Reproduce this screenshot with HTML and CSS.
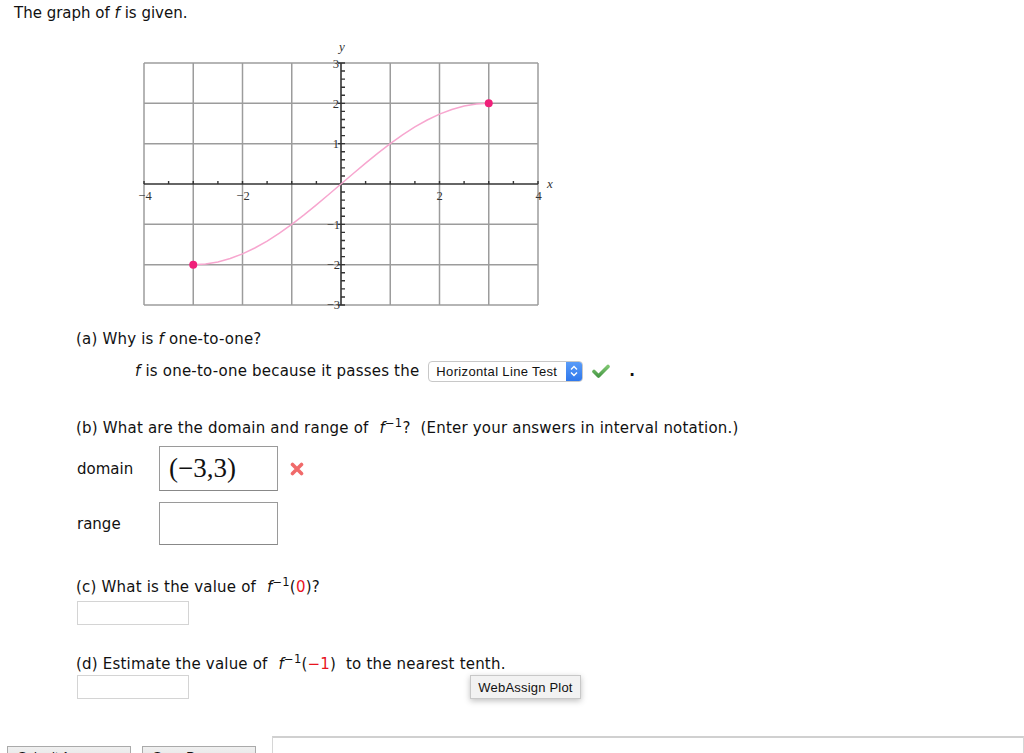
FILE: index.html
```html
<!DOCTYPE html>
<html>
<head>
<meta charset="utf-8">
<link rel="stylesheet" href="styles.css">
</head>
<body>
<div class="page">
  <p class="title">The graph of <i>f</i> is given.</p>

  <svg class="graph" width="440" height="280" viewBox="130 38 440 280">
    <g class="grid">
      <line x1="144" y1="63" x2="144" y2="305"/>
      <line x1="193.25" y1="63" x2="193.25" y2="305"/>
      <line x1="242.5" y1="63" x2="242.5" y2="305"/>
      <line x1="291.75" y1="63" x2="291.75" y2="305"/>
      <line x1="390.25" y1="63" x2="390.25" y2="305"/>
      <line x1="439.5" y1="63" x2="439.5" y2="305"/>
      <line x1="488.75" y1="63" x2="488.75" y2="305"/>
      <line x1="538" y1="63" x2="538" y2="305"/>
      <line x1="144" y1="63" x2="538" y2="63"/>
      <line x1="144" y1="103.33" x2="538" y2="103.33"/>
      <line x1="144" y1="143.67" x2="538" y2="143.67"/>
      <line x1="144" y1="224.33" x2="538" y2="224.33"/>
      <line x1="144" y1="264.67" x2="538" y2="264.67"/>
      <line x1="144" y1="305" x2="538" y2="305"/>
    </g>
    <g class="axis">
      <line x1="144" y1="184" x2="538" y2="184"/>
      <line x1="341" y1="63" x2="341" y2="305"/>
    </g>
    <g class="ticks">
      <path d="M144 184v-3M168.6 184v-3M193.25 184v-3M217.9 184v-3M242.5 184v-3M267.1 184v-3M291.75 184v-3M316.4 184v-3M365.6 184v-3M390.25 184v-3M414.9 184v-3M439.5 184v-3M464.1 184v-3M488.75 184v-3M513.4 184v-3M538 184v-3"/>
      <path d="M341 63h4M341 71.07h4M341 79.13h4M341 87.2h4M341 95.27h4M341 103.33h4M341 111.4h4M341 119.47h4M341 127.53h4M341 135.6h4M341 143.67h4M341 151.73h4M341 159.8h4M341 167.87h4M341 175.93h4M341 192.07h4M341 200.13h4M341 208.2h4M341 216.27h4M341 224.33h4M341 232.4h4M341 240.47h4M341 248.53h4M341 256.6h4M341 264.67h4M341 272.73h4M341 280.8h4M341 288.87h4M341 296.93h4M341 305h4"/>
      <path d="M341 63h-3M341 103.33h-3M341 143.67h-3M341 224.33h-3M341 264.67h-3M341 305h-3"/>
    </g>
    <g class="lbl">
      <text x="145" y="200" text-anchor="middle">−4</text>
      <text x="243" y="200" text-anchor="middle">−2</text>
      <text x="439.5" y="200" text-anchor="middle">2</text>
      <text x="538.5" y="200" text-anchor="middle">4</text>
      <text x="339" y="67.5" text-anchor="end">3</text>
      <text x="339" y="107.5" text-anchor="end">2</text>
      <text x="339" y="148" text-anchor="end">1</text>
      <text x="340" y="228.5" text-anchor="end">−1</text>
      <text x="340" y="269" text-anchor="end">−2</text>
      <text x="340" y="309" text-anchor="end">−3</text>
    </g>
    <text class="var" x="339" y="51">y</text>
    <text class="var" x="547" y="188">x</text>
    <polyline class="curve" points="193.25,264.67 205.56,263.97 217.88,261.91 230.19,258.52 242.5,253.85 254.81,247.99 267.13,241.03 279.44,233.1 291.75,224.33 304.06,214.87 316.38,204.88 328.69,194.53 341,184 353.31,173.47 365.63,163.12 377.94,153.13 390.25,143.67 402.56,134.9 414.88,126.97 427.19,120.01 439.5,114.15 451.81,109.48 464.13,106.09 476.44,104.03 488.75,103.33"/>
    <circle class="dot" cx="193.25" cy="264.67" r="4"/>
    <circle class="dot" cx="488.75" cy="103.33" r="4"/>
  </svg>

  <p class="q qa">(a) Why is <i>f</i> one-to-one?</p>
  <div class="answer-line">
    <span><i>f</i> is one-to-one because it passes the</span>
    <span class="select">
      <span class="select-text">Horizontal Line Test</span>
      <span class="select-arrows">
        <svg width="8" height="12" viewBox="0 0 8 12"><path d="M1 4.5L4 1.5L7 4.5M1 7.5L4 10.5L7 7.5" fill="none" stroke="#fff" stroke-width="1.4"/></svg>
      </span>
    </span>
    <svg class="check" width="18" height="14" viewBox="0 0 18 14"><defs><linearGradient id="cg" x1="0" y1="0" x2="0" y2="1"><stop offset="0" stop-color="#7cc46f"/><stop offset="1" stop-color="#4a9a48"/></linearGradient></defs><path d="M2 7.5L6.5 12L16 2.5" fill="none" stroke="url(#cg)" stroke-width="3.6" stroke-linecap="round" stroke-linejoin="round"/></svg>
    <span class="period">.</span>
  </div>

  <p class="q qb">(b) What are the domain and range of <span class="fn"><i>f</i><sup>−1</sup></span>? &nbsp;(Enter your answers in interval notation.)</p>
  <div class="field-row domain-row">
    <span class="field-label">domain</span>
    <span class="math-box">(−3,3)</span>
    <svg class="cross" width="14" height="14" viewBox="0 0 14 14"><path d="M2.5 2.5L11.5 11.5M11.5 2.5L2.5 11.5" stroke="#f06a6a" stroke-width="3.6" stroke-linecap="round"/></svg>
  </div>
  <div class="field-row range-row">
    <span class="field-label">range</span>
    <span class="math-box empty"></span>
  </div>

  <p class="q qc">(c) What is the value of <span class="fn"><i>f</i><sup>−1</sup></span>(<span class="red">0</span>)?</p>
  <div class="input-row"><span class="small-input"></span></div>

  <p class="q qd">(d) Estimate the value of <span class="fn"><i>f</i><sup>−1</sup></span>(<span class="red">−1</span>) &nbsp;to the nearest tenth.</p>
  <div class="input-row tip-host">
    <span class="small-input"></span>
    <span class="tooltip">WebAssign Plot</span>
  </div>

  <div class="footer">
    <span class="btn btn-submit">Submit Answer</span>
    <span class="btn btn-save">Save Progress</span>
    <div class="notes"></div>
  </div>
</div>
</body>
</html>
```

FILE: styles.css
```css
html, body {
  margin: 0;
  padding: 0;
  background: #fff;
  overflow: hidden;
}
body {
  font-family: "DejaVu Sans", Verdana, sans-serif;
  font-size: 15px;
  color: #111;
}
.page {
  width: 1024px;
  height: 753px;
  overflow: hidden;
  padding-top: 4px;
  box-sizing: border-box;
}
p { margin: 0; }
.title {
  margin-left: 14px;
  line-height: 18px;
}
.graph {
  display: block;
  margin-top: 16px;
  margin-left: 130px;
}
.grid line { stroke: #9c9c9c; stroke-width: 1.5; }
.axis line { stroke: #333; stroke-width: 1.6; }
.ticks path { stroke: #333; stroke-width: 1.4; fill: none; }
.lbl text { font-family: "Liberation Serif", serif; font-size: 12.5px; fill: #333; }
.var { font-family: "Liberation Serif", serif; font-style: italic; font-size: 13px; fill: #333; }
.curve { fill: none; stroke: #f7a6cf; stroke-width: 1.5; }
.dot { fill: #f0207a; }

.q { line-height: 20px; margin-left: 76px; letter-spacing: 0.2px; }
.qa { margin-top: 11px; }
.answer-line {
  margin-top: 11px;
  margin-left: 135px;
  height: 22px;
  display: flex;
  align-items: center;
  letter-spacing: 0.2px;
}
.select {
  display: inline-flex;
  align-items: stretch;
  margin-left: 9px;
  height: 19px;
  border: 1px solid #c8c8c8;
  border-radius: 4px;
  background: #fff;
  font-family: "Liberation Sans", Arial, sans-serif;
  font-size: 13px;
  letter-spacing: 0.35px;
  color: #111;
  overflow: hidden;
}
.select-text {
  display: flex;
  align-items: center;
  padding: 0 9px 0 7px;
}
.select-arrows {
  width: 16px;
  background: linear-gradient(#5a9cf8, #2f78ec);
  display: flex;
  align-items: center;
  justify-content: center;
}
.check { margin-left: 9px; }
.period { margin-left: 19px; font-weight: bold; }

.qb { margin-top: 36px; }
.fn { font-style: normal; margin-left: 6px; }
.fn i { font-family: "DejaVu Sans", sans-serif; }
.fn sup { font-size: 11.5px; vertical-align: 6px; line-height: 0; }
.red { color: #e8141e; }
.field-row {
  display: flex;
  align-items: center;
  margin-left: 77px;
}
.field-label { width: 82px; }
.domain-row { margin-top: 8px; }
.range-row { margin-top: 11px; }
.math-box {
  box-sizing: border-box;
  width: 119px;
  height: 45px;
  border: 1px solid #9a9a9a;
  border-bottom-color: #888;
  display: flex;
  align-items: center;
  padding-left: 9px;
  font-family: "Liberation Serif", "Times New Roman", serif;
  font-size: 27px;
  color: #111;
}
.math-box.empty { height: 43px; }
.cross { margin-left: 12px; }

.qc { margin-top: 32px; }
.input-row { margin-left: 77px; margin-top: 4px; height: 24px; }
.small-input {
  display: block;
  box-sizing: border-box;
  width: 112px;
  height: 24px;
  border: 1px solid #d4d4d4;
  background: #fff;
}
.qd { margin-top: 29px; }
.tip-host { position: relative; margin-top: 1px; }
.tooltip {
  position: absolute;
  left: 393px;
  top: 0;
  box-sizing: border-box;
  width: 111px;
  height: 24px;
  border: 1px solid #c8c8c8;
  background: #f2f2f2;
  box-shadow: 0 2px 6px rgba(0,0,0,0.25);
  font-family: "Liberation Sans", Arial, sans-serif;
  font-size: 13px;
  letter-spacing: 0.2px;
  color: #111;
  display: flex;
  align-items: center;
  justify-content: center;
}
.footer {
  margin-top: 37px;
  display: flex;
  align-items: flex-start;
}
.btn {
  box-sizing: border-box;
  margin-top: 10px;
  height: 24px;
  border: 1px solid #aaa;
  background: linear-gradient(#f0f0f0, #dcdcdc);
  font-family: "Liberation Sans", Arial, sans-serif;
  font-size: 13px;
  padding: 2px 10px;
  color: #111;
  white-space: nowrap;
}
.btn-submit { margin-left: 7px; width: 124px; }
.btn-save { margin-left: 11px; width: 114px; }
.notes {
  margin-left: 16px;
  flex: 1;
  height: 40px;
  border: 1px solid #d6d6d6;
  border-top: 2px solid #d0d0d0;
}
```
